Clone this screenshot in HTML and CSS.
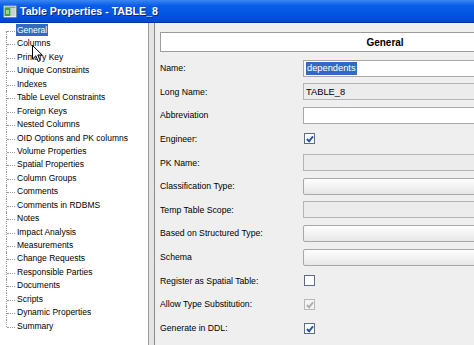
FILE: index.html
```html
<!DOCTYPE html>
<html>
<head>
<meta charset="utf-8">
<link rel="stylesheet" href="styles.css">
</head>
<body>
<div class="window">
  <div class="titlebar">
    <svg class="ticon" width="14" height="13" viewBox="0 0 14 13">
      <rect x="0.5" y="0.5" width="13" height="12" rx="1" fill="#e8eef0" stroke="#6d8a8a"/>
      <rect x="1.5" y="3" width="6" height="8" fill="#3fa33a"/>
      <rect x="8" y="3" width="4.5" height="8" fill="#c9d3d6"/>
      <rect x="1.5" y="1.5" width="11" height="1.5" fill="#7aa6b0"/>
      <path d="M3 6 H6 M3 8 H6" stroke="#fff" stroke-width="1"/>
    </svg>
    <span class="ttext">Table Properties - TABLE_8</span>
  </div>
  <div class="main">
    <div class="tree">
      <ul class="items">
        <li><span class="sel">General</span></li>
        <li><span>Columns</span></li>
        <li><span>Primary Key</span></li>
        <li><span>Unique Constraints</span></li>
        <li><span>Indexes</span></li>
        <li><span>Table Level Constraints</span></li>
        <li><span>Foreign Keys</span></li>
        <li><span>Nested Columns</span></li>
        <li><span>OID Options and PK columns</span></li>
        <li><span>Volume Properties</span></li>
        <li><span>Spatial Properties</span></li>
        <li><span>Column Groups</span></li>
        <li><span>Comments</span></li>
        <li><span>Comments in RDBMS</span></li>
        <li><span>Notes</span></li>
        <li><span>Impact Analysis</span></li>
        <li><span>Measurements</span></li>
        <li><span>Change Requests</span></li>
        <li><span>Responsible Parties</span></li>
        <li><span>Documents</span></li>
        <li><span>Scripts</span></li>
        <li><span>Dynamic Properties</span></li>
        <li class="last"><span>Summary</span></li>
      </ul>
      <svg class="cursor" width="12" height="18" viewBox="0 0 12 18">
        <path d="M0.5 0.5 L0.5 14 L3.8 10.8 L6.2 16.5 L8.2 15.6 L5.8 10 L10.2 10 Z" fill="#fff" stroke="#000" stroke-width="1"/>
      </svg>
    </div>
    <div class="splitter"></div>
    <div class="panel">
      <div class="header">General</div>
      <div class="form">
        <div class="lbl">Name:</div>
        <div class="fld"><div class="input"><span class="seltext">dependents</span></div></div>
        <div class="lbl">Long Name:</div>
        <div class="fld"><div class="input dis">TABLE_8</div></div>
        <div class="lbl">Abbreviation</div>
        <div class="fld"><div class="input"></div></div>
        <div class="lbl">Engineer:</div>
        <div class="fld"><div class="cb on"></div></div>
        <div class="lbl">PK Name:</div>
        <div class="fld"><div class="input dis"></div></div>
        <div class="lbl">Classification Type:</div>
        <div class="fld"><div class="combo"></div></div>
        <div class="lbl">Temp Table Scope:</div>
        <div class="fld"><div class="input dis"></div></div>
        <div class="lbl">Based on Structured Type:</div>
        <div class="fld"><div class="combo"></div></div>
        <div class="lbl">Schema</div>
        <div class="fld"><div class="combo"></div></div>
        <div class="lbl">Register as Spatial Table:</div>
        <div class="fld"><div class="cb"></div></div>
        <div class="lbl">Allow Type Substitution:</div>
        <div class="fld"><div class="cb on disc"></div></div>
        <div class="lbl">Generate in DDL:</div>
        <div class="fld"><div class="cb on"></div></div>
      </div>
    </div>
  </div>
</div>
</body>
</html>
```
FILE: styles.css
```css
html, body {
  margin: 0;
  padding: 0;
  width: 474px;
  height: 345px;
  overflow: hidden;
  background: #ffffff;
}
.window {
  width: 474px;
  height: 345px;
  display: flex;
  flex-direction: column;
  font-family: "Liberation Sans", Arial, sans-serif;
  font-size: 8.7px;
  color: #000;
}
.titlebar {
  height: 22px;
  flex: none;
  display: flex;
  align-items: center;
  gap: 3px;
  padding-left: 3px;
  background: linear-gradient(#3b86f5 0%, #0a5ee8 25%, #0052e0 70%, #0047d0 100%);
  border-bottom: 1px solid #0036a8;
}
.ttext {
  color: #fff;
  font-weight: bold;
  font-size: 10.6px;
  text-shadow: 1px 1px 0 #0a2a80;
}
.main {
  flex: 1;
  display: flex;
  min-height: 0;
}
.tree {
  width: 148px;
  flex: none;
  background: #fff;
  position: relative;
  overflow: hidden;
  font-size: 8.5px;
}
.items {
  list-style: none;
  margin: 0;
  padding: 0;
  padding-top: 1px;
}
.items li {
  height: 13.45px;
  line-height: 13.45px;
  position: relative;
  padding-left: 16px;
  white-space: nowrap;
}
.items li::before {
  content: "";
  position: absolute;
  left: 6px;
  top: 0;
  bottom: 0;
  border-left: 1px dotted #999;
}
.items li:first-child::before { top: 7px; }
.items li.last::before { bottom: 6px; }
.items li::after {
  content: "";
  position: absolute;
  left: 7px;
  width: 8px;
  top: 7px;
  border-top: 1px dotted #999;
}
.items li span {
  padding: 0 1px;
}
.items li span.sel {
  background: #316ac5;
  color: #fff;
  padding: 1px 1px;
}
.cursor {
  position: absolute;
  left: 32px;
  top: 22px;
}
.splitter {
  width: 7px;
  flex: none;
  background: #e4e4e4;
  border-left: 1px solid #9a9a9a;
  border-right: 1px solid #8a8a8a;
  box-sizing: border-box;
}
.panel {
  flex: 1;
  min-width: 0;
  overflow: hidden;
  background: #efefef;
  padding: 9px 0 0 5px;
}
.header {
  width: 450px;
  height: 20px;
  box-sizing: border-box;
  background: #fff;
  border: 1px solid #9c9c9c;
  display: flex;
  align-items: center;
  justify-content: center;
  font-weight: bold;
  font-size: 10px;
}
.form {
  display: grid;
  grid-template-columns: 143px 300px;
  grid-auto-rows: 23.65px;
  margin-top: 4.2px;
}
.lbl {
  display: flex;
  align-items: center;
  white-space: nowrap;
}
.fld {
  display: flex;
  align-items: center;
}
.input {
  width: 300px;
  height: 17px;
  box-sizing: border-box;
  background: #fff;
  border: 1px solid #a8a8a8;
  display: flex;
  align-items: center;
  padding-left: 2px;
  font-size: 9.3px;
}
.input.dis {
  background: #ececec;
  border-color: #b4b4b4;
}
.seltext {
  background: #316ac5;
  color: #fff;
  line-height: 13px;
  padding: 0 1px;
}
.combo {
  width: 300px;
  height: 17px;
  box-sizing: border-box;
  border: 1px solid #a8a8a8;
  border-radius: 2px;
  background: linear-gradient(#fdfdfd 0%, #f3f3f3 50%, #e6e6e6 100%);
}
.cb {
  width: 11px;
  height: 11px;
  box-sizing: border-box;
  border: 1px solid #5a6e86;
  background: #fff;
  margin-left: 1px;
  position: relative;
}
.cb.on::after {
  content: "";
  position: absolute;
  left: 3px;
  top: 1px;
  width: 2px;
  height: 5px;
  border-right: 2px solid #2a55a8;
  border-bottom: 2px solid #2a55a8;
  transform: rotate(40deg);
}
.cb.disc {
  border-color: #b8b8b8;
  background: #f4f4f4;
}
.cb.disc::after {
  border-color: #b0b0b0;
}
```
